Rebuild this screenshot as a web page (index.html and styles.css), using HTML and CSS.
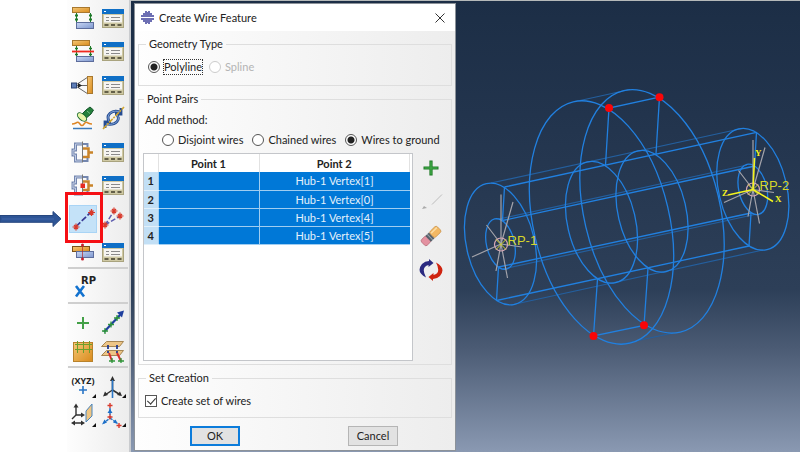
FILE: index.html
```html
<!DOCTYPE html>
<html lang="en">
<head>
<meta charset="utf-8">
<title>Create Wire Feature</title>
<link rel="stylesheet" href="styles.css">
</head>
<body>
<svg width="0" height="0" class="defs" aria-hidden="true">
  <defs>
    <linearGradient id="gold" x1="0" y1="0" x2="1" y2="1"><stop offset="0" stop-color="#f5c877"/><stop offset="1" stop-color="#d98a1c"/></linearGradient>
    <linearGradient id="steel" x1="0" y1="0" x2="1" y2="1"><stop offset="0" stop-color="#c9d6f3"/><stop offset="1" stop-color="#7d97cf"/></linearGradient>
    <symbol id="manager" viewBox="0 0 26 26">
      <rect x="2.500" y="4.500" width="21" height="18" fill="#cfc9a4" stroke="#a9a37e"/>
      <rect x="2" y="4" width="22" height="5" fill="#0f6fc6"/>
      <path d="M4 6.500h2" stroke="#fff"/>
      <rect x="4" y="10" width="18" height="7.500" fill="#f6f5f2"/>
      <path d="M6 12.500h3M6 15.500h3M11 12.500h9M11 15.500h9" stroke="#8a8a8a"/>
      <path d="M4.500 20h4M11 20h4M17.500 20h4" stroke="#635f48" stroke-width="2"/>
    </symbol>
    <symbol id="star" viewBox="0 0 8 8"><path d="M4 .5v7M.5 4h7M2 2l4 4M6 2L2 6" stroke="#d83a2c" stroke-width="1.200"/></symbol>
  </defs>
</svg>

<main class="workspace">
  <aside class="callout" aria-hidden="true">
    <svg viewBox="0 0 63 18" class="callout-arrow"><path d="M0 5.500H53V1.500L61 8.800 53 16.500V12.300H0Z" fill="#2e5596" stroke="#27477f"/><path d="M2 9h52" stroke="#4067aa"/></svg>
  </aside>

  <nav class="toolbar" aria-label="Toolbox">
    <div class="tools tools-main">
      <button aria-label="Create constraint"><svg viewBox="0 0 26 26"><path d="M6.500 8v10M20.500 8v10" stroke="#1e7a2a"/><rect x="2.500" y="2.500" width="17" height="5" fill="url(#gold)" stroke="#a8782f"/><rect x="6.500" y="17.500" width="17" height="6" fill="url(#steel)" stroke="#5d6d9c"/><path d="M5 10.500h3M5 14.500h3M19 10.500h3M19 14.500h3" stroke="#1e7a2a" stroke-width="2"/></svg></button>
      <button aria-label="Constraint manager"><svg><use href="#manager"/></svg></button>
      <button aria-label="Create interaction"><svg viewBox="0 0 26 26"><path d="M6.500 8v10M20.500 8v10" stroke="#1e7a2a"/><rect x="2.500" y="2.500" width="17" height="5" fill="url(#gold)" stroke="#a8782f"/><rect x="6.500" y="18.500" width="17" height="5" fill="url(#steel)" stroke="#5d6d9c"/><path d="M5 10.500h3M19 10.500h3M5 16.500h3M19 16.500h3" stroke="#1e7a2a" stroke-width="1.600"/><path d="M2 13.500h22" stroke="#f0281e" stroke-width="1.800"/></svg></button>
      <button aria-label="Interaction manager"><svg><use href="#manager"/></svg></button>
      <button aria-label="Create coupling"><svg viewBox="0 0 26 26"><path d="M5 13.500L18 5M5 13.500h13M5 13.500L18 22" stroke="#666" fill="none"/><rect x="17.500" y="4.500" width="5" height="17" fill="url(#gold)" stroke="#a8782f"/><rect x="1.500" y="11" width="5" height="5" fill="#5d7db8" stroke="#2e4574"/><path d="M8 11v5l4-2.500z" fill="#222"/></svg></button>
      <button aria-label="Coupling manager"><svg><use href="#manager"/></svg></button>
      <button aria-label="Find contact pairs"><svg viewBox="0 0 26 26"><path d="M9 12l7-7 4-3 3.500 3-2.500 4-7 6z" fill="#24813b" stroke="#14522a"/><ellipse cx="12" cy="12" rx="3" ry="5.500" transform="rotate(-50 12 12)" fill="#e8f4a8" stroke="#1a6b2e"/><path d="M17 6l3 2.500" stroke="#78bd83"/><path d="M2 19q2 0 4-1 2-2 4 1t4 0q2-3 4-1 2 1 4 1" fill="none" stroke="#dd8523" stroke-width="1.500"/><path d="M3 23.500h19" stroke="#3a78b8" stroke-width="1.500"/></svg></button>
      <button aria-label="Contact cycle"><svg viewBox="0 0 26 26"><path d="M9.500 17C5 10 12 4 20 7M21 3v6h-6M16 9c6 5 0 12-10 10M5 23v-6h6" fill="none" stroke="#254c92" stroke-width="2.800"/><path d="M9.500 17C5 10 12 4 20 7M16 9c6 5 0 12-10 10" fill="none" stroke="#8fb0e0" stroke-width=".9"/><path d="M3 24L24 2" stroke="#d2a52d" stroke-width="1.600" stroke-dasharray="5 1 2 1"/></svg></button>
      <button aria-label="Create connector section"><svg viewBox="0 0 26 26"><path d="M12 5H5.500v6H3v5h2.500v6H12" fill="none" stroke="#7487af" stroke-width="3"/><path d="M12 5H5.500v6H3v5h2.500v6H12" fill="none" stroke="#c2cde5"/><path d="M13 9.500h5.500v4H23M13 18h5.500v-4.500" fill="none" stroke="#c9842a" stroke-width="2.500"/><path d="M12.500 2.500v21" stroke="#777"/><path d="M13 5h4.500v3M13 22h4.500v-3" fill="none" stroke="#7487af" stroke-width="2"/></svg></button>
      <button aria-label="Connector section manager"><svg><use href="#manager"/></svg></button>
      <button aria-label="Create connector assignment"><svg viewBox="0 0 26 26"><path d="M12 5H5.500v6H3v5h2.500v6H12" fill="none" stroke="#7487af" stroke-width="3"/><path d="M12 5H5.500v6H3v5h2.500v6H12" fill="none" stroke="#c2cde5"/><path d="M13 9.500h5.500v4H23M13 18h5.500v-4.500" fill="none" stroke="#c9842a" stroke-width="2.500"/><path d="M12.500 2.500v21" stroke="#777"/><path d="M13 5h4.500v3M13 22h4.500v-3" fill="none" stroke="#7487af" stroke-width="2"/><rect x="10.500" y="11.500" width="4.500" height="4.500" fill="#e62a20"/></svg></button>
      <button aria-label="Connector assignment manager"><svg><use href="#manager"/></svg></button>
      <button class="selected" aria-label="Create wire feature" aria-pressed="true"><svg viewBox="0 0 26 26"><path d="M6 20.500L21 6" stroke="#373994" stroke-width="1.700" stroke-dasharray="6 2"/><use href="#star" x="2" y="17" width="8" height="8"/><use href="#star" x="17.500" y="2.500" width="8" height="8"/></svg></button>
      <button aria-label="Modify wire feature"><svg viewBox="0 0 26 26"><path d="M5 19L14 5M5 19L20 10" stroke="#5d5cae" stroke-width="1.500" stroke-dasharray="5 2"/><use href="#star" x="1" y="15" width="8" height="8"/><use href="#star" x="10" y="1" width="8" height="8"/><use href="#star" x="16" y="6" width="8" height="8"/></svg></button>
      <button aria-label="Create fastener"><svg viewBox="0 0 26 26"><rect x="2.500" y="7.500" width="17" height="5" fill="url(#gold)" stroke="#7a5118"/><rect x="6.500" y="12.500" width="17" height="6" fill="url(#steel)" stroke="#5d6d9c"/><path d="M12.500 5v15" stroke="#b02a2a" stroke-width=".7"/><circle cx="12.500" cy="6" r="1.500" fill="#c5202d"/><circle cx="12.500" cy="20" r="1.500" fill="#c5202d"/></svg></button>
      <button aria-label="Fastener manager"><svg><use href="#manager"/></svg></button>
    </div>
    <div class="tools tools-single">
      <button aria-label="Create reference point"><svg viewBox="0 0 26 30"><text x="11" y="12" class="rp-letters">RP</text><path d="M6 14l8 10.500M14 14L6 24.500" stroke="#1272cf" stroke-width="2.600"/></svg></button>
    </div>
    <div class="tools tools-pair">
      <button aria-label="Create datum point"><svg viewBox="0 0 26 26"><path d="M13 8v12M7 14h12" stroke="#43a047" stroke-width="2"/></svg></button>
      <button aria-label="Create datum axis"><svg viewBox="0 0 26 26"><path d="M4 23L20 6" stroke="#1e3f9e" stroke-width="2.200"/><path d="M24 1.500l-2 7-5-5z" fill="#1e3f9e"/><path d="M2 22h6M5 19v6M8 15.500h6M11 12.500v6M14 9h6M17 6v6" stroke="#2f963b" stroke-width="1.300"/></svg></button>
      <button aria-label="Create partition"><svg viewBox="0 0 26 26"><rect x="3.500" y="4.500" width="19" height="19" fill="url(#gold)" stroke="#b8822b"/><path d="M7.500 3v12M13.500 3v12M19.500 3v12M5 6.500h17M5 11.500h17" stroke="#6c9f2b" stroke-width="1"/></svg></button>
      <button aria-label="Create mesh part"><svg viewBox="0 0 26 26"><path d="M1.500 8.500l5-5h17l-4 5zM1.500 17.500l5-5h17l-4 5z" fill="#edc586" stroke="#a68653"/><path d="M8 7v8M17 7v8" stroke="#20388d" stroke-width="1.800" stroke-dasharray="4 2"/><path d="M9 15l3 8M17 15l4 8" stroke="#d32f2f" stroke-width="2"/><path d="M9 23h6M12 20v5M18 23h6M21 20v5" stroke="#2f963b" stroke-width="1.300"/></svg></button>
    </div>
    <div class="tools tools-pair tools-last">
      <button aria-label="Datum coordinates"><svg viewBox="0 0 26 26"><text x="13" y="9" text-anchor="middle" class="xyz-letters">(XYZ)</text><path d="M13 11v8M9 15h8" stroke="#2a76c6" stroke-width="1.600"/><path d="M26 19v4h-4z" fill="#111"/></svg></button>
      <button aria-label="Datum coordinate system"><svg viewBox="0 0 26 26"><path d="M12.500 15V4M12.500 15L5 20M12.500 15l8 5" stroke="#303030" stroke-width="1.500"/><path d="M12.500 1l2.500 5h-5zM3 21.500l2-5 3 3.500zM22 21l-5-1 3-3.500z" fill="#303030"/><path d="M12.500 5v18" stroke="#2a76c6" stroke-width="1.600"/><path d="M26 19v4h-4z" fill="#111"/></svg></button>
      <button aria-label="Datum plane"><svg viewBox="0 0 26 26"><path d="M6 3v9h7M6 12l-4 4M3 20h10" fill="none" stroke="#303030" stroke-width="1.400"/><path d="M6 .5l2.500 4h-5zM15 12l-4-2.500v5zM1 20l4-2.500v5zM15 20l-4-2.500v5z" fill="#303030"/><path d="M16 8l6-7v12l-6 6z" fill="#efc582" stroke="#4984bd"/><path d="M26 20v4h-4z" fill="#111"/></svg></button>
      <button aria-label="Three point system"><svg viewBox="0 0 26 26"><path d="M10 5v10l-6 5M10 15l7 5" fill="none" stroke="#2a76c6" stroke-width="1.500" stroke-dasharray="3 1"/><path d="M10 6l2.500 4h-5zM2 21.500l2.500-5 2.500 3zM18 21l-5-1.500 2.500-3z" fill="#1c6fc8"/><path d="M10 0v5M7.500 2.500h5M10 11.500v5M7.500 14h5M19 20v5M16.500 22.500h5" stroke="#d83a2c" stroke-width="1.400"/><path d="M26 20v4h-4z" fill="#111"/></svg></button>
    </div>
  </nav>

  <section class="viewport">
    <section class="dialog" role="dialog" aria-labelledby="dialog-title">
      <header class="titlebar">
        <svg viewBox="0 0 13 13" class="app-icon"><path d="M4 0h2v1h1V0h2v2h2v2h2v5h-2v2H9v2H7v-1H6v1H4v-2H2V9H0V4h2V2h2z" fill="#6d6fb3"/><path d="M0 6.500h13" stroke="#fff"/></svg>
        <h1 id="dialog-title">Create Wire Feature</h1>
        <button class="close" aria-label="Close"><svg viewBox="0 0 10 10"><path d="M.5.5l9 9M9.500.5l-9 9" stroke="#333"/></svg></button>
      </header>
      <form class="dialog-body">
        <fieldset class="geometry-group">
          <legend>Geometry Type</legend>
          <div class="choices geometry">
            <label><input type="radio" name="geometry" checked><span class="focused">Polyline</span></label>
            <label class="disabled"><input type="radio" name="geometry" disabled><span>Spline</span></label>
          </div>
        </fieldset>
        <fieldset class="pairs">
          <legend>Point Pairs</legend>
          <p>Add method:</p>
          <div class="choices methods">
            <label><input type="radio" name="method"><span>Disjoint wires</span></label>
            <label><input type="radio" name="method"><span>Chained wires</span></label>
            <label><input type="radio" name="method" checked><span>Wires to ground</span></label>
          </div>
          <div class="pair-editor">
            <div class="table-frame">
              <table>
                <thead><tr><th class="index"></th><th class="first">Point 1</th><th>Point 2</th></tr></thead>
                <tbody>
                  <tr><th class="index">1</th><td></td><td>Hub-1 Vertex[1]</td></tr>
                  <tr><th class="index">2</th><td></td><td>Hub-1 Vertex[0]</td></tr>
                  <tr><th class="index">3</th><td></td><td>Hub-1 Vertex[4]</td></tr>
                  <tr><th class="index">4</th><td></td><td>Hub-1 Vertex[5]</td></tr>
                </tbody>
              </table>
            </div>
            <div class="pair-actions">
              <button type="button" aria-label="Add"><svg viewBox="0 0 24 24"><path d="M12 4.500v15M4.500 12h15" stroke="#1e7a26" stroke-width="3.200"/><path d="M12 5.500v13M5.500 12h13" stroke="#3da544" stroke-width="1.600"/></svg></button>
              <button type="button" aria-label="Edit"><svg viewBox="0 0 24 24"><path d="M13 14.500L23 4.500" stroke="#bdbdbd"/><path d="M3 19l2-3 3 2z" fill="#aaa"/></svg></button>
              <button type="button" aria-label="Delete"><svg viewBox="0 0 24 24"><g transform="rotate(-44 12 12)"><rect x="1" y="8" width="8" height="8" rx="2" fill="#e391a0" stroke="#a95c68" stroke-width=".6"/><rect x="8" y="8" width="5" height="8" fill="#56606a"/><path d="M10.500 8v8" stroke="#9aa3aa"/><rect x="13" y="8" width="10" height="8" rx="2" fill="#f3b863" stroke="#bf8438" stroke-width=".6"/><path d="M14 10h8" stroke="#fbdca3" stroke-width="1.500"/></g></svg></button>
              <button type="button" aria-label="Swap"><svg viewBox="0 0 24 24"><path d="M7 19.500Q-3.500 14 3 6q3-3 7-3V1l4.500 4-5 4V7Q1.500 9 7 19.500Z" fill="#2b2a80"/><path d="M17 4.500Q27.500 10 21 18q-3 3-7 3v2l-4.500-4 5-4v2Q22.500 15 17 4.500Z" fill="#cf2410"/></svg></button>
            </div>
          </div>
        </fieldset>
        <fieldset class="set-group">
          <legend>Set Creation</legend>
          <div class="choices set"><label><input type="checkbox" checked><span>Create set of wires</span></label></div>
        </fieldset>
        <footer class="dialog-actions">
          <button type="button" class="default">OK</button>
          <button type="button">Cancel</button>
        </footer>
      </form>
    </section>

    <svg class="scene" viewBox="456 0 344 452" preserveAspectRatio="xMinYMin meet" role="img" aria-label="Shaft and hub wireframe">
      <g class="wire faint">
        <path d="M491 183L742 128.500M511 305L763 250M499 219L747 165M503 269L755 214.500M580 100.500L630 89.500M622 344L673 333"/>
      </g>
      <g class="wire">
        <ellipse rx="34" ry="62" transform="translate(500.500 244) rotate(-13.200)"/>
        <ellipse rx="14" ry="25.700" transform="translate(500.500 244) rotate(-13.200)"/>
        <ellipse rx="34" ry="62" transform="translate(752.800 189.300) rotate(-13.200)"/>
        <ellipse rx="14" ry="25.700" transform="translate(752.800 189.300) rotate(-13.200)"/>
        <ellipse rx="68" ry="124" transform="translate(601.500 222.500) rotate(-13.200)"/>
        <ellipse rx="68" ry="124" transform="translate(652 211.300) rotate(-13.200)"/>
        <ellipse rx="34" ry="62" transform="translate(601.500 222.300) rotate(-13.200)"/>
        <ellipse rx="34" ry="62" transform="translate(652 211.300) rotate(-13.200)"/>
        <path d="M504.500 187L756.500 132.300M496.500 300.500L749 246M502.500 220.500L755 166M498.500 267L751 213"/>
        <path d="M504.500 187l-2 33.500M498.500 267l-2 33.500M756.500 132.300l-2 33.700M751 213l-2 33"/>
        <path d="M605.500 165L609 108L659.500 97L656 154M597.500 279L593.500 336L644 325.500L648 268"/>
      </g>
      <g class="spokes">
        <path id="spokes" d="M501 244V194.500M501 244l12-42M501 244l-14.500-19M501 244l-29 13M501 244l-5 27M501 244l6.500 34M501 244l21 3"/>
        <use href="#spokes" x="252" y="-54.500"/>
      </g>
      <g class="hub">
        <circle cx="501" cy="244.500" r="6.500"/><circle cx="753" cy="189.500" r="6.500"/>
      </g>
      <g class="axes">
        <path d="M496 239.500l10 10M506 239.500l-10 10M748 184.500l10 10M758 184.500l-10 10"/>
        <path class="triad" d="M753 189.500L754.500 158M753 189.500L728 195M753 189.500L773 201.500"/>
      </g>
      <g class="nodes"><circle cx="609" cy="108" r="4"/><circle cx="659.500" cy="97.300" r="4"/><circle cx="593.500" cy="336" r="4"/><circle cx="644" cy="325.300" r="4"/></g>
      <text class="rp-label" x="507.500" y="245">RP-1</text>
      <text class="rp-label" x="759.500" y="190">RP-2</text>
      <text class="axis-label" x="755" y="156">Y</text>
      <text class="axis-label" x="722" y="196">Z</text>
      <text class="axis-label" x="775" y="202">X</text>
    </svg>
  </section>
</main>
</body>
</html>
```
FILE: styles.css
```css
* { box-sizing: border-box; }

body {
  margin: 0;
  background: #fff;
  color: #222;
  font: 11px/16px Lato, "Open Sans", sans-serif;
}

button, input { font: inherit; color: inherit; margin: 0; }
.defs { position: absolute; }

.workspace {
  display: grid;
  grid-template-columns: 67px 64px minmax(0, 1fr);
  min-height: 100vh;
}

/* Callout arrow pointing at the selected tool */
.callout { padding-top: 210px; }
.callout-arrow { display: block; width: 63px; height: 18px; }

/* Toolbox */
.toolbar {
  background: linear-gradient(90deg, #fdfdfd, #ededed);
  border-right: 2px solid #c9cbce;
}
.tools {
  display: grid;
  grid-template-columns: 28px 28px;
  column-gap: 2px;
  margin: 0 1px;
  padding-left: 1px;
}
.tools button {
  display: grid;
  place-items: center;
  width: 28px;
  height: 28px;
  padding: 0;
  border: 0;
  background: none;
}
.tools svg { width: 26px; height: 26px; overflow: visible; }
.tools-main { height: 267px; padding-top: 4px; padding-bottom: 1px; align-content: space-between; }
.tools-single, .tools-pair { border-top: 2px solid #cfcfcf; }
.tools-single { height: 35px; padding-top: 3px; }
.tools-single svg { height: 30px; }
.tools-pair { height: 64px; padding-top: 4px; }
.tools-last { padding-top: 6px; }
.tools .selected {
  position: relative;
  background: #c4e2f8;
  border: 1px solid #a9d4f5;
}
/* Red highlight frame over the selected tool */
.selected::before {
  content: "";
  position: absolute;
  inset: -14px -7px -11px -5px;
  border: 3px solid #f50f14;
}
.rp-letters { font: bold 10px "DejaVu Sans", sans-serif; fill: #222; }
.xyz-letters { font: bold 9px "Open Sans", sans-serif; fill: #222; }

/* Viewport */
.viewport {
  display: grid;
  grid-template-columns: 322px minmax(0, 1fr);
  align-items: start;
  padding-left: 3px;
  border-top: 1px solid #b5b9b9;
  background: linear-gradient(#1c2e46, #22344d 25%, #2d3f58 64%, #4b5b74 77%, #8a99b2);
}
.scene { display: block; width: 100%; margin-top: -1px; }
.wire { fill: none; stroke: #2180e0; stroke-width: 1.300; }
.faint { stroke: #245f9e; stroke-width: 1.200; }
.spokes { fill: none; stroke: #a3a3aa; stroke-width: 1.200; }
.hub { fill: none; stroke: #d6a7b4; stroke-width: 1.200; }
.axes { stroke: #d8d82c; stroke-width: 1; fill: none; }
.triad { stroke: #f5f51e; stroke-width: 1.600; }
.nodes { fill: #fa0508; }
.rp-label { font: 13px "Liberation Sans", sans-serif; fill: #d6d62a; }
.axis-label { font: bold 9px "Liberation Serif", serif; fill: #f2f222; }

/* Dialog */
.dialog {
  margin-top: 2px;
  border: 1px solid #8c9299;
  background: linear-gradient(90deg, #fefefe, #ededed);
}
.titlebar {
  display: flex;
  align-items: center;
  gap: 5px;
  height: 27px;
  padding: 0 10px 0 6px;
  background: #fff;
}
.app-icon { width: 13px; height: 13px; }
h1 { margin: 0; font: inherit; }
.close { margin-left: auto; padding: 0; border: 0; background: none; width: 10px; height: 10px; }
.close svg { display: block; width: 10px; height: 10px; }

.dialog-body { padding: 5px 3px 4px; }
fieldset {
  min-width: 0;
  margin: 0 0 5px;
  padding: 5px 6px;
  border: 1px solid #dedede;
}
legend { margin-left: 1px; padding: 0 3px; }
p { margin: 0; }

.geometry-group { padding-bottom: 8px; }
.set-group { padding-bottom: 6px; }

.choices { display: flex; height: 20px; align-items: center; }
.choices label { display: flex; align-items: center; gap: 3px; white-space: nowrap; }
.choices span { border: 1px solid transparent; line-height: 14px; }
.choices .focused { border: 1px dotted #333; }
.geometry { gap: 6px; padding-left: 3px; }
.methods { gap: 8px; margin-top: 2px; padding-left: 19px; }
.disabled { color: #b4b4b4; }

input { appearance: none; width: 12px; height: 12px; border: 1px solid #555; background: #fff; }
input[type="radio"] { border-radius: 50%; }
input[type="radio"]:checked { background: radial-gradient(circle, #222 3px, #fff 4px); }
input:disabled { border-color: #ccc; }
input[type="checkbox"] { display: grid; place-items: center; }
input[type="checkbox"]::after {
  content: "";
  width: 4px;
  height: 7px;
  margin-bottom: 2px;
  border: solid #333;
  border-width: 0 1px 1px 0;
  transform: rotate(42deg);
}

.pairs { padding: 5px 5px 3px 4px; }
.pairs p { padding-left: 2px; }
.pair-editor { display: grid; grid-template-columns: minmax(0, 1fr) 33px; margin-top: 3px; }
.table-frame { height: 208px; border: 1px solid #c4c6ca; background: #fff; }
table { width: 266px; border-collapse: collapse; table-layout: fixed; text-align: center; }
th, td { height: 18px; padding: 0; line-height: 17px; }
thead th { border-right: 1px solid #e2e2e2; }
.index { width: 14px; }
.first { width: 101px; }
tbody th { background: #c2dff5; }
tbody td { background: #0078d7; color: #e4f1fb; border: solid #9fcdf1; border-width: 0 0 1px 1px; }
tbody th { border-bottom: 1px solid #e2f0fa; }

.pair-actions { display: flex; flex-direction: column; align-items: center; gap: 10px; padding: 3px 0 0 3px; }
.pair-actions button { width: 24px; height: 24px; padding: 0; border: 0; background: none; }
.pair-actions svg { display: block; width: 24px; height: 24px; }

.dialog-actions { display: flex; justify-content: space-between; padding: 3px 54px 0 52px; }
.dialog-actions button {
  width: 50px;
  height: 20px;
  padding: 0;
  border: 1px solid #b5b5b5;
  background: #e2e2e2;
  line-height: 16px;
}
.dialog-actions .default { border: 2px solid #0c7cdb; }
```
